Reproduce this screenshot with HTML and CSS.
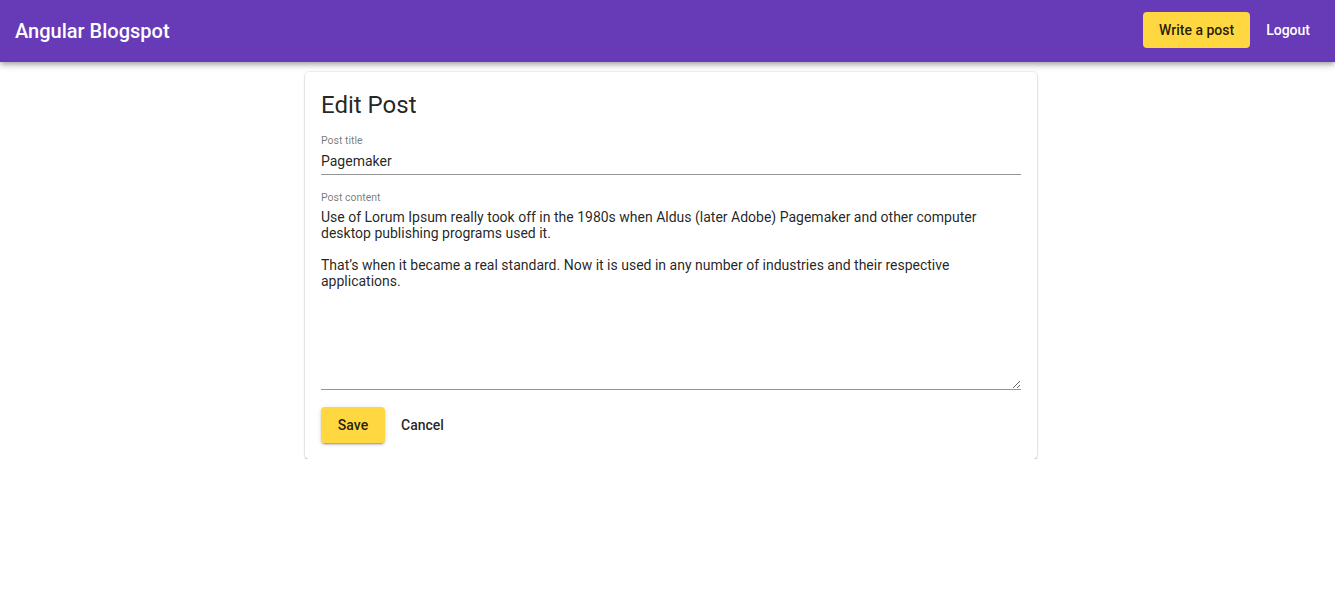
FILE: index.html
```html
<!DOCTYPE html>
<html>
<head>
    <meta charset="UTF-8" />
    <title>Angular Blogspot</title>
    <link rel="stylesheet" href="styles.css">
</head>
<body>
    <div class="toolbar">
        <span class="brand">Angular Blogspot</span>
        <div class="nav">
            <a href="javascript:;" class="btn btn-accent">Write a post</a>
            <a href="javascript:;" class="btn btn-light">Logout</a>
        </div>
    </div>

    <div class="page">
        <div class="card">
            <h2 class="card-title">Edit Post</h2>
            <div class="field">
                <label class="field-label">Post title</label>
                <input class="field-input" type="text" value="Pagemaker">
            </div>
            <div class="field">
                <label class="field-label">Post content</label>
                <textarea class="field-input field-area">Use of Lorum Ipsum really took off in the 1980s when Aldus (later Adobe) Pagemaker and other computer desktop publishing programs used it.

That’s when it became a real standard. Now it is used in any number of industries and their respective applications.</textarea>
            </div>
            <div class="actions">
                <a href="javascript:;" class="btn btn-accent btn-raised">Save</a>
                <a href="javascript:;" class="btn">Cancel</a>
            </div>
        </div>
    </div>
</body>
</html>
```

FILE: styles.css
```css
*{
    margin: 0;
    padding: 0;
    box-sizing: border-box;
}
body{
    font-family: Roboto, "Helvetica Neue", sans-serif;
    color: rgba(0,0,0,.87);
    background: #fff;
}
.toolbar{
    display: flex;
    align-items: center;
    justify-content: space-between;
    height: 62px;
    padding: 0 9px 0 16px;
    background-color: #673ab7;
    color: #fff;
    box-shadow: 0 2px 4px -1px rgba(0,0,0,.2), 0 4px 5px 0 rgba(0,0,0,.14), 0 1px 10px 0 rgba(0,0,0,.12);
    position: relative;
}
.brand{
    font-size: 20px;
    font-weight: 500;
    margin-left: -1px;
}
.nav{
    display: flex;
    align-items: center;
    margin-top: -2px;
}
.btn{
    display: inline-block;
    height: 36px;
    line-height: 36px;
    padding: 0 16px;
    min-width: 64px;
    text-align: center;
    font-size: 14px;
    font-weight: 500;
    color: rgba(0,0,0,.87);
    text-decoration: none;
    border-radius: 4px;
}
.btn-accent{
    background-color: #ffd740;
}
.btn-light{
    color: #fff;
}
.btn-raised{
    box-shadow: 0 3px 1px -2px rgba(0,0,0,.2), 0 2px 2px 0 rgba(0,0,0,.14), 0 1px 5px 0 rgba(0,0,0,.12);
}

.page{
    display: flex;
    justify-content: center;
    padding: 10px 0 0 7px;
}
.card{
    width: 732px;
    padding: 17px 16px 16px;
    background: #fff;
    border-radius: 4px;
    box-shadow: 0 2px 1px -1px rgba(0,0,0,.2), 0 1px 1px 0 rgba(0,0,0,.14), 0 1px 3px 0 rgba(0,0,0,.12), 0 0 0 1px rgba(0,0,0,.05);
}
.card-title{
    font-size: 24px;
    font-weight: 400;
    line-height: 32px;
    margin-bottom: 14px;
}
.field{
    display: flex;
    flex-direction: column;
    border-bottom: 1px solid rgba(0,0,0,.42);
    margin-bottom: 17px;
}
.field-label{
    font-size: 10.5px;
    line-height: 12px;
    color: rgba(0,0,0,.54);
}
.field-input{
    border: none;
    outline: none;
    background: transparent;
    font-family: inherit;
    font-size: 14px;
    line-height: 16px;
    color: rgba(0,0,0,.87);
    padding: 6px 0 5px;
}
.field-area{
    height: 185px;
    resize: vertical;
    padding: 5px 0 2px;
}
.actions{
    display: flex;
    margin-top: 4px;
}
```
